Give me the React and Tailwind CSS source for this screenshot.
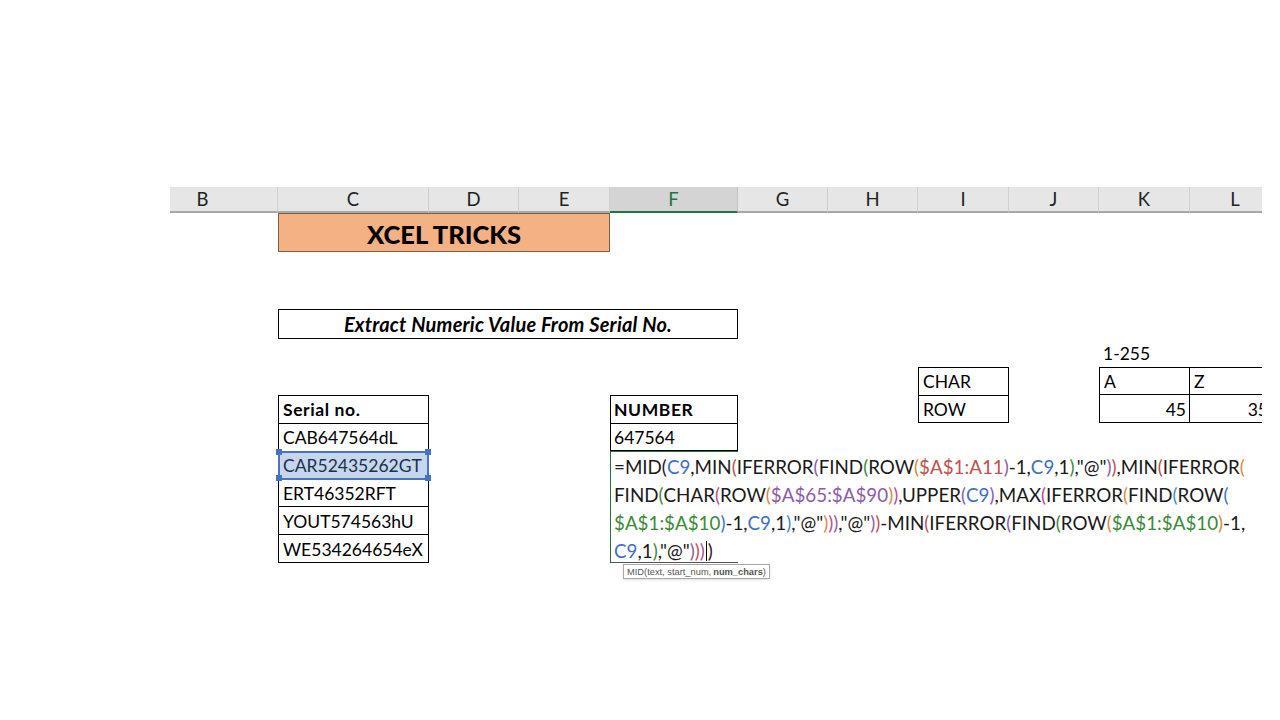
import React from "react";

/* Excel sheet view: column headers B..L, a few small bordered tables and
   the in-cell formula editor open on F9. */

const K = "#1a1a1a";
const BLUE = "#3f6fc4";
const RED = "#c0504d";
const PURPLE = "#8a5ca8";
const GREEN = "#3a8a3a";
const ORANGE = "#d98a3c";
const PINK = "#b0508e";
const TEAL = "#3b8fb5";

const formula = [
  [["=MID(", K], ["C9", BLUE], [",MIN", K], ["(", RED], ["IFERROR", K], ["(", PURPLE], ["FIND", K], ["(", GREEN], ["ROW", K], ["(", ORANGE], ["$A$1:A11", RED], [")", PURPLE], ["-1,", K], ["C9", BLUE], [",1", K], [")", GREEN], [',"@"', K], [")", PURPLE], [")", RED], [",MIN", K], ["(", RED], ["IFERROR", K], ["(", ORANGE]],
  [["FIND", K], ["(", GREEN], ["CHAR", K], ["(", PINK], ["ROW", K], ["(", ORANGE], ["$A$65:$A$90", PURPLE], [")", ORANGE], [")", PINK], [",UPPER", K], ["(", PURPLE], ["C9", BLUE], [")", PURPLE], [",MAX", K], ["(", PINK], ["IFERROR", K], ["(", ORANGE], ["FIND", K], ["(", TEAL], ["ROW", K], ["(", BLUE]],
  [["$A$1:$A$10", GREEN], [")", BLUE], ["-1,", K], ["C9", BLUE], [",1", K], [")", TEAL], [',"@"', K], [")", ORANGE], [")", PINK], [")", PURPLE], [',"@"', K], [")", PURPLE], [")", RED], ["-MIN", K], ["(", RED], ["IFERROR", K], ["(", PURPLE], ["FIND", K], ["(", GREEN], ["ROW", K], ["(", ORANGE], ["$A$1:$A$10", GREEN], [")", ORANGE], ["-1,", K]],
  [["C9", BLUE], [",1", K], [")", GREEN], [',"@"', K], [")", PURPLE], [")", RED], [")", PINK]],
];

const cols = ["B", "C", "D", "E", "F", "G", "H", "I", "J", "K", "L"];

function Corner({ className }) {
  return <span className={`absolute w-[6px] h-[6px] bg-[#4472c4] ${className}`} />;
}

export default function App() {
  return (
    <div className="relative min-h-screen w-[1280px] h-[720px] bg-white pl-[170px] pt-[187px] font-['Lato',sans-serif] text-[17.5px] leading-[20px] text-[#111]">
      <div className="w-[1092px] h-[420px] overflow-hidden">
        <div className="grid grid-cols-[108px_151px_90px_91px_128px_90px_90px_91px_90px_91px_91px] grid-rows-[26px_39px_28px_29px_30px_28px_28px_28px_28px_28px_28px_28px_28px] w-[1111px]">
          {/* column headers */}
          {cols.map((c) =>
            c === "F" ? (
              <div key={c} className="row-start-1 flex items-center justify-center bg-[#d4d4d4] border-r border-[#c4c4c4] border-b-2 border-b-[#217346] text-[#217346] text-[18.5px]">
                {c}
              </div>
            ) : (
              <div key={c} className={`row-start-1 flex items-center justify-center bg-[#e6e6e6] border-r border-[#cfcfcf] border-b-2 border-b-[#a8a8a8] text-[#222] text-[18.5px] ${c === "B" ? "pr-[42px]" : ""}`}>
                {c}
              </div>
            )
          )}

          {/* title */}
          <div className="col-start-2 col-span-3 row-start-2 flex items-center justify-center pt-[2px] bg-[#f4b183] border border-[#7d5c48] font-black text-[25.5px] leading-[30px] text-black">
            XCEL TRICKS
          </div>

          <div className="col-start-2 col-span-4 row-start-5 flex items-center justify-center border border-black font-bold italic text-[20px] tracking-[0.2px] text-black">
            Extract Numeric Value From Serial No.
          </div>

          {/* 1-255 label */}
          <div className="col-start-10 row-start-6 flex items-center pl-[4px] pt-[2px] text-black">1-255</div>

          {/* CHAR / ROW */}
          <div className="col-start-8 row-start-7 row-span-2 flex flex-col border border-black divide-y divide-black text-black">
            <div className="flex-1 flex items-center pl-[4px] pt-[2px]">CHAR</div>
            <div className="flex-1 flex items-center pl-[4px] pt-[2px]">ROW</div>
          </div>

          {/* A / Z */}
          <div className="col-start-10 col-span-2 row-start-7 row-span-2 grid grid-cols-2 grid-rows-2 border border-black text-black">
            <div className="flex items-center pl-[4px] pt-[2px] border-r border-b border-black">A</div>
            <div className="flex items-center pl-[4px] pt-[2px] border-b border-black">Z</div>
            <div className="flex items-center justify-end pr-[3px] pt-[2px] border-r border-black">45</div>
            <div className="flex items-center justify-end pr-[12px] pt-[2px]">35</div>
          </div>

          {/* serial numbers */}
          <div className="col-start-2 row-start-8 row-span-6 flex flex-col border border-black divide-y divide-black text-black">
            <div className="flex-1 flex items-center pl-[4px] pt-[2px] font-bold tracking-[0.6px]">Serial no.</div>
            <div className="flex-1 flex items-center pl-[4px] pt-[2px]">CAB647564dL</div>
            <div className="flex-1 relative flex items-center pl-[4px] pt-[2px] bg-[#c6d6ec] text-[#1d2f4f] outline-2 outline-[#4a74c0] -outline-offset-1">
              CAR52435262GT
              <Corner className="-left-[3px] -top-[3px]" />
              <Corner className="-right-[3px] -top-[3px]" />
              <Corner className="-left-[3px] -bottom-[3px]" />
              <Corner className="-right-[3px] -bottom-[3px]" />
            </div>
            <div className="flex-1 flex items-center pl-[4px] pt-[2px]">ERT46352RFT</div>
            <div className="flex-1 flex items-center pl-[4px] pt-[2px]">YOUT574563hU</div>
            <div className="flex-1 flex items-center pl-[4px] pt-[2px]">WE534264654eX</div>
          </div>

          {/* NUMBER */}
          <div className="col-start-5 row-start-8 row-span-2 flex flex-col border border-black divide-y divide-black text-black">
            <div className="flex-1 flex items-center pl-[3px] pt-[2px] font-bold tracking-[0.6px]">NUMBER</div>
            <div className="flex-1 flex items-center pl-[3px] pt-[2px]">647564</div>
          </div>

          {/* F9 in edit mode */}
          <div className="col-start-5 row-start-10 row-span-4 relative border-l border-t border-[#217346] border-b border-b-[#555]">
            <div className="absolute left-[3px] top-0 w-[660px] text-[18.8px]">
              {formula.map((line, i) => (
                <div key={i} className="h-[28px] flex items-center pt-[2px] whitespace-nowrap">
                  {line.map(([t, c], j) => (
                    <span key={j} style={{ color: c }}>{t}</span>
                  ))}
                  {i === 3 && <span className="inline-block w-px h-[20px] bg-black mx-px" />}
                  {i === 3 && <span style={{ color: K }}>)</span>}
                </div>
              ))}
            </div>
          </div>
        </div>
      </div>

      {/* function tooltip */}
      <div className="absolute left-[623px] top-[564px] h-[15px] px-[3px] flex items-center border border-[#a9a9a9] bg-white font-['Liberation_Sans',sans-serif] text-[9.3px] leading-[12px] text-[#555] shadow-sm">
        MID(text, start_num, <span className="font-bold ml-[2px]">num_chars</span>)
      </div>
    </div>
  );
}
